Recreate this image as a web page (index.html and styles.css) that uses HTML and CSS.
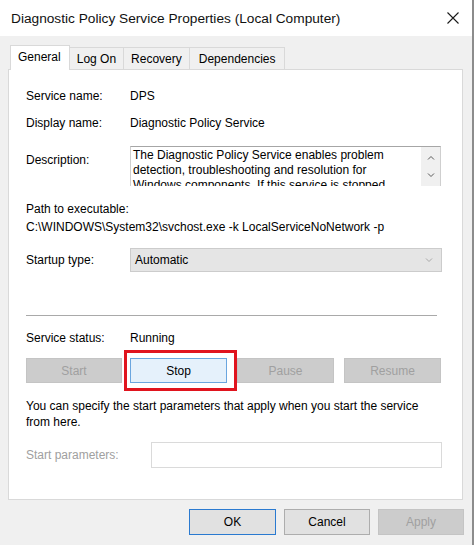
FILE: index.html
```html
<!DOCTYPE html>
<html>
<head>
<meta charset="utf-8">
<link rel="stylesheet" href="styles.css">
</head>
<body>
<div class="window">
  <div class="titlebar">
    <span class="title">Diagnostic Policy Service Properties (Local Computer)</span>
    <svg class="close" width="12" height="12" viewBox="0 0 12 12"><path d="M0.5 0.5 L11.5 11.5 M11.5 0.5 L0.5 11.5" stroke="#1a1a1a" stroke-width="1.1" fill="none"/></svg>
  </div>
  <div class="body">
    <div class="tabs">
      <div class="tab active">General</div>
      <div class="tab">Log On</div>
      <div class="tab">Recovery</div>
      <div class="tab deps">Dependencies</div>
    </div>
    <div class="panel">
      <div class="row r1"><span class="label">Service name:</span><span>DPS</span></div>
      <div class="row r2"><span class="label">Display name:</span><span>Diagnostic Policy Service</span></div>
      <div class="row desc-row">
        <span class="label desc-label">Description:</span>
        <div class="descbox">
          <div class="desctext">The Diagnostic Policy Service enables problem detection, troubleshooting and resolution for Windows components.  If this service is stopped, diagnostics will no longer function.</div>
          <div class="scroll">
            <svg width="8" height="5" viewBox="0 0 8 5"><path d="M1 4.5 L4 1.5 L7 4.5" fill="none" stroke="#5a5a5a" stroke-width="1"/></svg>
            <svg width="8" height="5" viewBox="0 0 8 5"><path d="M1 0.5 L4 3.5 L7 0.5" fill="none" stroke="#5a5a5a" stroke-width="1"/></svg>
          </div>
        </div>
      </div>
      <div class="path">
        <div>Path to executable:</div>
        <div>C:\WINDOWS\System32\svchost.exe -k LocalServiceNoNetwork -p</div>
      </div>
      <div class="row startup">
        <span class="label">Startup type:</span>
        <div class="select">
          <span>Automatic</span>
          <svg width="8" height="5" viewBox="0 0 8 5"><path d="M1 0.5 L4 3.5 L7 0.5" fill="none" stroke="#a8a8a8" stroke-width="1"/></svg>
        </div>
      </div>
      <div class="sep"></div>
      <div class="row status"><span class="label">Service status:</span><span>Running</span></div>
      <div class="svc-buttons">
        <div class="btn disabled b-start">Start</div>
        <div class="btn stop b-stop">Stop</div>
        <div class="btn disabled b-pause">Pause</div>
        <div class="btn disabled b-resume">Resume</div>
      </div>
      <p class="note">You can specify the start parameters that apply when you start the service from here.</p>
      <div class="row params">
        <span class="label params-label">Start parameters:</span>
        <div class="input"></div>
      </div>
    </div>
    <div class="footer">
      <div class="btn fbtn ok">OK</div>
      <div class="btn fbtn cancel">Cancel</div>
      <div class="btn fbtn disabled apply">Apply</div>
    </div>
  </div>
</div>
</body>
</html>
```
FILE: styles.css
```css
html, body {
  margin: 0;
  padding: 0;
  height: 100%;
}
body {
  background: #8c8c8c;
  font-family: "Liberation Sans", Arial, sans-serif;
  font-size: 12px;
  color: #000;
}
.window {
  width: 472px;
  height: 545px;
  background: #f0f0f0;
  display: flex;
  flex-direction: column;
}
.titlebar {
  height: 36px;
  flex: none;
  background: #fff;
  display: flex;
  align-items: center;
  justify-content: space-between;
  padding: 0 13px 0 11px;
}
.title {
  font-size: 13.7px;
  color: #111;
}
.body {
  flex: 1;
  display: flex;
  flex-direction: column;
  padding: 0 9px 0 8px;
}
.tabs {
  display: flex;
  align-items: flex-end;
  height: 24px;
  margin-top: 9px;
  padding-left: 2px;
  position: relative;
  z-index: 1;
}
.tab {
  height: 22px;
  line-height: 22px;
  padding: 0 7px;
  border: 1px solid #d9d9d9;
  border-bottom: none;
  box-sizing: border-box;
  background: #f0f0f0;
  margin-left: -1px;
}
.tab:first-child {
  margin-left: 0;
  padding: 0 8px 3px 7px;
}
.tab.deps {
  padding: 0 8px 0 9px;
}
.tab.active {
  height: 25px;
  margin-bottom: -1px;
  background: #fff;
  z-index: 2;
}
.panel {
  background: #fff;
  border: 1px solid #d9d9d9;
  height: 431px;
  box-sizing: border-box;
  padding: 0 21px 0 17px;
  display: flex;
  flex-direction: column;
}
.row {
  display: flex;
  line-height: 16px;
}
.label {
  width: 104px;
  flex: none;
}
.r1 { margin-top: 18px; }
.r2 { margin-top: 11px; }
.desc-row { margin-top: 15px; }
.desc-label { margin-top: 6px; }
.descbox {
  flex: 1;
  height: 40px;
  box-sizing: border-box;
  border: 1px solid #cfcfcf;
  border-top-color: #a6a6a6;
  border-bottom: none;
  display: flex;
  overflow: hidden;
}
.desctext {
  flex: 1;
  padding: 1px 20px 0 2px;
  line-height: 15px;
}
.scroll {
  width: 19px;
  flex: none;
  background: #f0f0f0;
  display: flex;
  flex-direction: column;
  align-items: center;
  justify-content: space-between;
  padding: 8px 0 8px;
  box-sizing: border-box;
}
.path {
  margin-top: 14px;
  line-height: 18px;
}
.startup {
  margin-top: 12px;
  line-height: 24px;
  margin-right: -1px;
}
.select {
  flex: 1;
  height: 24px;
  box-sizing: border-box;
  background: #e5e5e5;
  border: 1px solid #cccccc;
  display: flex;
  align-items: center;
  justify-content: space-between;
  padding: 0 8px 0 4px;
  line-height: 22px;
}
.sep {
  margin-top: 43px;
  height: 1px;
  background: #a9a9a9;
  margin-right: 4px;
}
.status { margin-top: 14px; }
.svc-buttons {
  margin-top: 12px;
  display: flex;
}
.btn {
  height: 25px;
  box-sizing: border-box;
  display: flex;
  align-items: center;
  justify-content: center;
  border: 1px solid #adadad;
  background: #e1e1e1;
}
.btn.disabled {
  background: #cccccc;
  border-color: #c4c4c4;
  color: #a0a0a0;
}
.b-start { width: 96px; }
.b-stop { width: 97px; margin-left: 8px; }
.b-pause { width: 97px; margin-left: 10px; }
.b-resume { width: 97px; margin-left: 10px; }
.btn.stop {
  background: #e5f1fb;
  border-color: #6aa6df;
  position: relative;
}
.btn.stop::after {
  content: "";
  position: absolute;
  left: -7px;
  right: -11px;
  top: -9px;
  bottom: -9px;
  border: 3px solid #e0141e;
}
.note {
  margin: 15px 0 0;
  line-height: 16px;
}
.params {
  margin-top: 12px;
  line-height: 26px;
  margin-right: -1px;
}
.params-label {
  width: 125px;
  color: #a0a0a0;
}
.input {
  flex: 1;
  height: 26px;
  box-sizing: border-box;
  border: 1px solid #dadada;
  background: #fff;
}
.footer {
  margin-top: 9px;
  display: flex;
  justify-content: flex-end;
  gap: 8px;
  margin-right: -1px;
}
.fbtn {
  height: 26px;
  width: 86px;
}
.fbtn.ok {
  width: 87px;
  border-color: #2a7ad0;
}
```
